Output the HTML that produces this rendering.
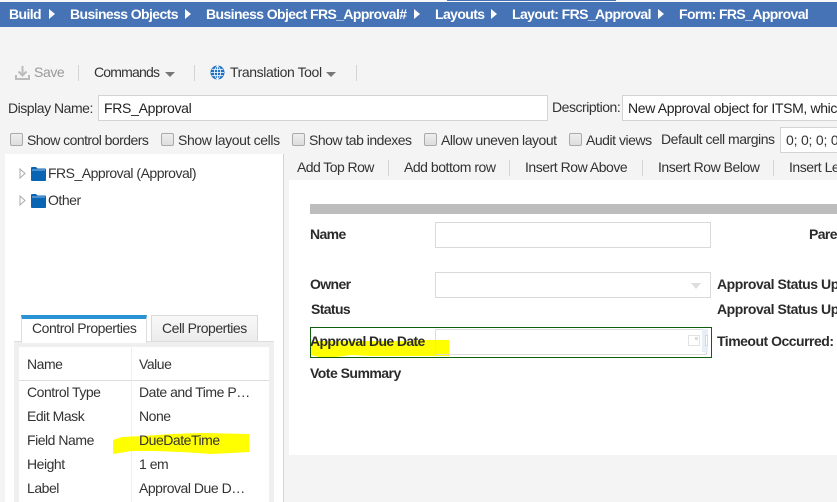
<!DOCTYPE html>
<html><head><meta charset="utf-8">
<style>
html,body{margin:0;padding:0}
body{width:837px;height:502px;overflow:hidden;position:relative;background:#f4f4f4;font-family:"Liberation Sans",Arial,sans-serif;font-size:14px;color:#333}
.a{position:absolute;box-sizing:border-box}
.t{position:absolute;white-space:nowrap;line-height:16px;letter-spacing:-.47px}
.h{position:absolute;white-space:nowrap;line-height:16px;color:#fff;font-weight:bold;font-size:14px;top:6px;letter-spacing:-.6px}
.ar{position:absolute;top:9px;width:0;height:0;border-left:6px solid #fff;border-top:5px solid transparent;border-bottom:5px solid transparent}
.cb{position:absolute;top:133px;width:13px;height:13px;box-sizing:border-box;border:1px solid #aaa;border-radius:2px;background:linear-gradient(#eee,#ddd)}
.sep{position:absolute;width:1px;background:#d4d4d4}
.inp{position:absolute;box-sizing:border-box;background:#fff;border:1px solid #d9d9d9}
.b{font-weight:bold;color:#2b2b2b;letter-spacing:-.62px}
.car{position:absolute;width:0;height:0;border-top:5px solid #777;border-left:5px solid transparent;border-right:5px solid transparent}
</style></head><body>
<div class="a" style="left:0;top:0;width:837px;height:2px;background:#f7f7f7"></div>
<div class="a" style="left:447px;top:0;width:169px;height:1px;background:#4573b5"></div>
<div class="a" style="left:0;top:2px;width:837px;height:25px;background:#4573b5"></div>
<span class="h" style="left:9px">Build</span><i class="ar" style="left:49px"></i>
<span class="h" style="left:70px">Business Objects</span><i class="ar" style="left:185px"></i>
<span class="h" style="left:206px">Business Object FRS_Approval#</span><i class="ar" style="left:414px"></i>
<span class="h" style="left:435px">Layouts</span><i class="ar" style="left:491px"></i>
<span class="h" style="left:512px">Layout: FRS_Approval</span><i class="ar" style="left:658px"></i>
<span class="h" style="left:679px">Form: FRS_Approval</span>

<svg class="a" style="left:15px;top:65px" width="15" height="16" viewBox="0 0 15 16"><path d="M7.5 1v9M3.500 6.500l4 4 4-4M1 10v4h13v-4" fill="none" stroke="#bbb" stroke-width="2"/></svg>
<span class="t" style="left:34px;top:64px;color:#999;letter-spacing:-.4px">Save</span>
<div class="sep" style="left:78px;top:65px;height:16px"></div>
<span class="t" style="left:94px;top:64px;letter-spacing:-.8px">Commands</span><i class="car" style="left:165px;top:72px"></i>
<div class="sep" style="left:194px;top:65px;height:16px"></div>
<svg class="a" style="left:210px;top:65px" width="15" height="15" viewBox="0 0 15 15"><circle cx="7.5" cy="7.5" r="7" fill="#1c6fc0"/><path d="M1 7.500h13M1.800 4.300h11.400M1.800 10.700h11.400M7.500 .5v14M7.500 .5c-4 3.500-4 10.500 0 14M7.500 .5c4 3.500 4 10.500 0 14" fill="none" stroke="#fff" stroke-width=".8"/></svg>
<span class="t" style="left:230px;top:64px;letter-spacing:-.4px">Translation Tool</span><i class="car" style="left:326px;top:72px"></i>
<div class="sep" style="left:356px;top:65px;height:16px"></div>

<span class="t" style="left:8px;top:100px">Display Name:</span>
<div class="inp" style="left:98px;top:95px;width:450px;height:26px;border-color:#d4d4d4"></div>
<span class="t" style="left:104px;top:100px;color:#222;letter-spacing:-.3px">FRS_Approval</span>
<span class="t" style="left:552px;top:99px">Description:</span>
<div class="inp" style="left:622px;top:95px;width:215px;height:26px;border-color:#d4d4d4;border-right:0"></div>
<span class="t" style="left:628px;top:100px;color:#222;width:209px;overflow:hidden;letter-spacing:-.35px">New Approval object for ITSM, which</span>

<i class="cb" style="left:10px"></i><span class="t" style="left:27px;top:132px;letter-spacing:-.55px">Show control borders</span>
<i class="cb" style="left:161px"></i><span class="t" style="left:178px;top:132px;letter-spacing:-.38px">Show layout cells</span>
<i class="cb" style="left:292px"></i><span class="t" style="left:309px;top:132px;letter-spacing:-.5px">Show tab indexes</span>
<i class="cb" style="left:424px"></i><span class="t" style="left:441px;top:132px">Allow uneven layout</span>
<i class="cb" style="left:569px"></i><span class="t" style="left:586px;top:132px">Audit views</span>
<span class="t" style="left:661px;top:131px">Default cell margins</span>
<div class="inp" style="left:780px;top:127px;width:57px;height:26px;border-color:#d4d4d4;border-right:0"></div>
<span class="t" style="left:786px;top:132px;width:51px;overflow:hidden;letter-spacing:-.2px">0; 0; 0; 0</span>

<!-- left panel -->
<div class="a" style="left:5px;top:154px;width:279px;height:348px;background:#fff;border-right:1px solid #d4d4d4"></div>
<svg class="a" style="left:19px;top:168px" width="8" height="11"><path d="M1 1l5 4.500-5 4.500z" fill="#fff" stroke="#aaa"/></svg>
<svg class="a" style="left:30px;top:166px" width="17" height="15" viewBox="0 0 17 15"><path d="M1 14V2q0-1 1-1h4l1.500 1.500H15q1 0 1 1V14q0 1-1 1H2q-1 0-1-1z" fill="#0a64b4"/><path d="M2 4h13" stroke="#8ab8e0"/></svg>
<span class="t" style="left:48px;top:165px;letter-spacing:-.5px">FRS_Approval (Approval)</span>
<svg class="a" style="left:19px;top:195px" width="8" height="11"><path d="M1 1l5 4.500-5 4.500z" fill="#fff" stroke="#aaa"/></svg>
<svg class="a" style="left:30px;top:193px" width="17" height="15" viewBox="0 0 17 15"><path d="M1 14V2q0-1 1-1h4l1.500 1.500H15q1 0 1 1V14q0 1-1 1H2q-1 0-1-1z" fill="#0a64b4"/><path d="M2 4h13" stroke="#8ab8e0"/></svg>
<span class="t" style="left:48px;top:192px">Other</span>

<!-- tabs -->
<div class="a" style="left:21px;top:315px;width:126px;height:28px;background:#fff;border:1px solid #ddd;border-top:4px solid #2a93d5;border-bottom:0;z-index:2"></div>
<span class="t" style="left:32px;top:320px;z-index:3">Control Properties</span>
<div class="a" style="left:151px;top:315px;width:107px;height:27px;background:linear-gradient(#f8f8f8,#ececec);border:1px solid #d9d9d9"></div>
<span class="t" style="left:162px;top:320px">Cell Properties</span>
<div class="a" style="left:14px;top:341px;width:260px;height:161px;background:#efefef;border-top:1px solid #ddd"></div>
<div class="a" style="left:19px;top:347px;width:250px;height:155px;background:#fff"></div>
<div class="a" style="left:19px;top:380px;width:250px;height:1px;background:#ddd"></div>
<div class="a" style="left:131px;top:348px;width:1px;height:154px;background:#eee"></div>
<span class="t" style="left:27px;top:356px">Name</span><span class="t" style="left:139px;top:356px">Value</span>
<svg class="a" style="left:112px;top:432px" width="137" height="24"><path d="M1 8L10 5 30 4 60 2 90 1 137 2V20L100 22 70 20 40 19 20 19 1 22z" fill="#ff0"/></svg>
<span class="t" style="left:27px;top:384px">Control Type</span><span class="t" style="left:139px;top:384px">Date and Time P…</span>
<span class="t" style="left:27px;top:408px">Edit Mask</span><span class="t" style="left:139px;top:408px">None</span>
<span class="t" style="left:27px;top:432px">Field Name</span><span class="t" style="left:139px;top:432px">DueDateTime</span>
<span class="t" style="left:27px;top:456px">Height</span><span class="t" style="left:139px;top:456px">1 em</span>
<span class="t" style="left:27px;top:480px">Label</span><span class="t" style="left:139px;top:480px">Approval Due D…</span>

<!-- right toolbar -->
<span class="t" style="left:297px;top:159px;letter-spacing:-.56px">Add Top Row</span>
<div class="sep" style="left:388px;top:160px;height:16px"></div>
<span class="t" style="left:404px;top:159px">Add bottom row</span>
<div class="sep" style="left:509px;top:160px;height:16px"></div>
<span class="t" style="left:525px;top:159px">Insert Row Above</span>
<div class="sep" style="left:642px;top:160px;height:16px"></div>
<span class="t" style="left:658px;top:159px">Insert Row Below</span>
<div class="sep" style="left:773px;top:160px;height:16px"></div>
<span class="t" style="left:789px;top:159px">Insert Left</span>

<!-- canvas -->
<div class="a" style="left:289px;top:180px;width:548px;height:275px;background:#fff"></div>
<div class="a" style="left:310px;top:204px;width:527px;height:10px;background:#bdbdbd"></div>

<span class="t b" style="left:310px;top:226px">Name</span>
<div class="inp" style="left:435px;top:222px;width:276px;height:26px"></div>
<span class="t b" style="left:809px;top:226px">Parent</span>

<span class="t b" style="left:310px;top:276px">Owner</span>
<div class="inp" style="left:435px;top:272px;width:276px;height:26px"></div>
<i class="a" style="left:691px;top:283px;width:0;height:0;border-top:6px solid #ddd;border-left:5px solid transparent;border-right:5px solid transparent"></i>
<span class="t b" style="left:717px;top:276px;letter-spacing:-.45px">Approval Status Update</span>

<span class="t b" style="left:311px;top:301px">Status</span>
<span class="t b" style="left:717px;top:301px;letter-spacing:-.45px">Approval Status Update</span>

<svg class="a" style="left:311px;top:336px" width="140" height="21"><path d="M0 19V5L100 5 101 4H138V20L60 20 40 19 25 21H8z" fill="#ff0"/></svg>
<div class="a" style="left:310px;top:327px;width:402px;height:31px;border:1px solid #0f5f0f"></div>
<div class="a" style="left:435px;top:329px;width:272px;height:26px;border:1px solid #dcdcdc"></div>
<div class="a" style="left:702px;top:329px;width:6px;height:23px;background:#e6eef7"></div>
<div class="a" style="left:705px;top:335px;width:3px;height:11px;border:1px solid #d8d8d8;background:#fff"></div>
<div class="a" style="left:688px;top:335px;width:12px;height:11px;border:1px solid #e2e2e2;background:#fff"></div>
<div class="a" style="left:695px;top:337px;width:3px;height:3px;border:1px solid #ccc;border-radius:50%"></div>
<span class="t b" style="left:310px;top:333px">Approval Due Date</span>
<span class="t b" style="left:717px;top:333px;letter-spacing:-.5px">Timeout Occurred:</span>

<span class="t b" style="left:310px;top:365px;letter-spacing:-.52px">Vote Summary</span>
</body></html>
